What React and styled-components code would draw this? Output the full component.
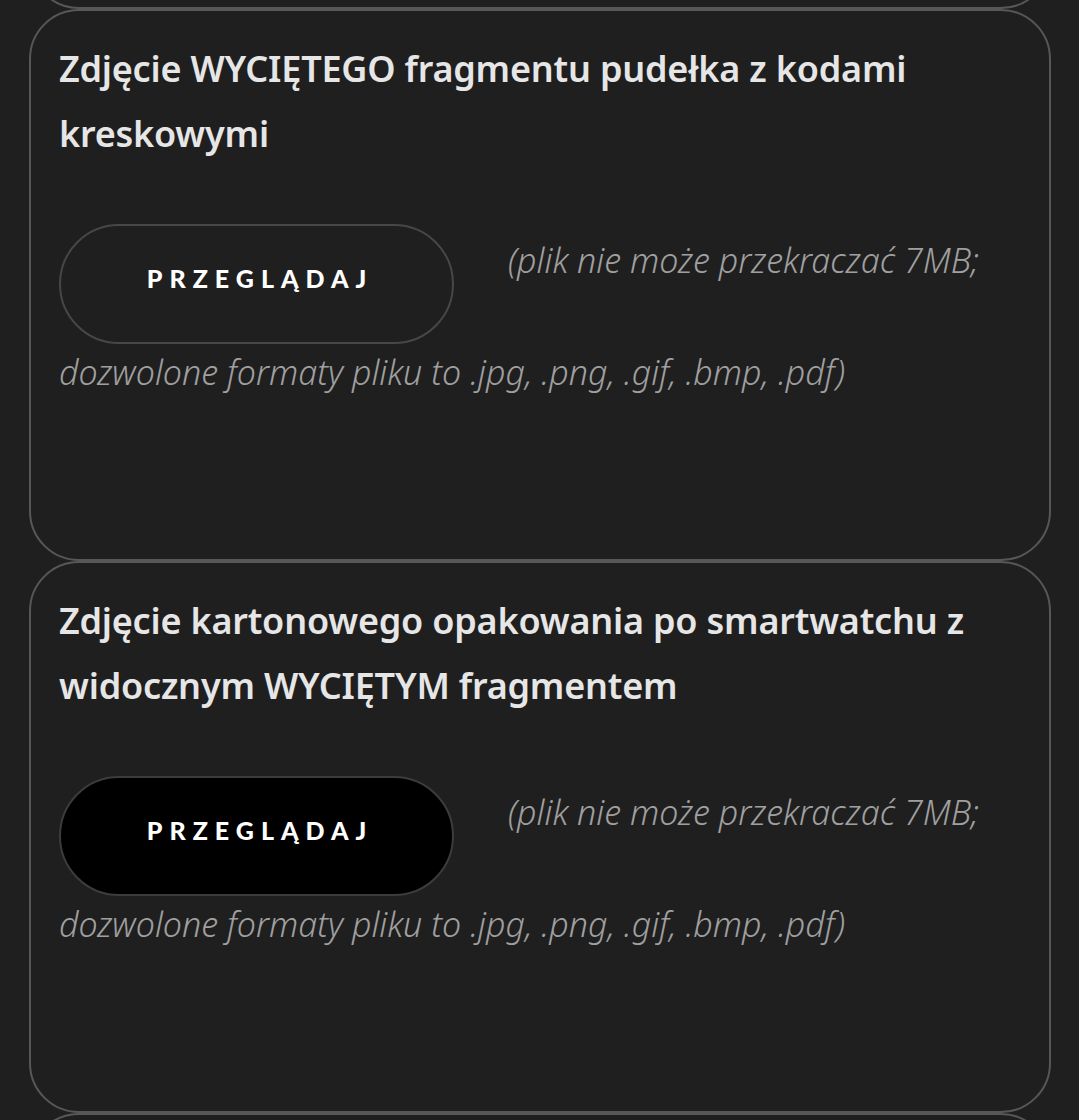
import styled, { createGlobalStyle } from 'styled-components';

const GlobalStyle = createGlobalStyle`
  html, body {
    margin: 0;
    padding: 0;
    background: #1f1f1f;
  }
  body {
    font-family: 'Noto Sans', 'Open Sans', sans-serif;
    overflow: hidden;
  }
`;

const Page = styled.main`
  display: flex;
  flex-direction: column;
  padding: 0 28px 0 29px;
  margin-top: -543px;
`;

const Card = styled.section`
  box-sizing: border-box;
  height: 552px;
  border: 2px solid #575757;
  border-radius: 50px;
  padding: 25px 28px 0 28px;
`;

const Title = styled.h2`
  margin: 0;
  color: #e6e6e6;
  font-family: 'Noto Sans', sans-serif;
  font-weight: 600;
  font-size: 36px;
  letter-spacing: -0.2px;
  line-height: 65px;
`;

const Upload = styled.div`
  margin-top: 58px;
  font-family: 'Noto Sans', sans-serif;
  font-style: italic;
  font-weight: 300;
  font-size: 34px;
  line-height: 72px;
  color: #a0a0a0;
`;

const BrowseButton = styled.button`
  display: inline-flex;
  vertical-align: top;
  align-items: center;
  justify-content: center;
  box-sizing: border-box;
  width: 395px;
  height: 120px;
  margin: 0 54px -8px 0;
  padding: 0 0 12px 7px;
  border: 2px solid ${props => (props.$filled ? '#3c3c3c' : '#474747')};
  border-radius: 60px;
  background: ${props => (props.$filled ? '#000000' : 'transparent')};
  color: #ffffff;
  font-family: 'Lato', sans-serif;
  font-style: normal;
  font-weight: 900;
  font-size: 25px;
  letter-spacing: 7px;
  cursor: pointer;
`;

const cards = [
  { title: 'Zdjęcie WYCIĘTEGO fragmentu pudełka z kodami kreskowymi', filled: false },
  { title: 'Zdjęcie kartonowego opakowania po smartwatchu z widocznym WYCIĘTYM fragmentem', filled: true },
];

export default function App() {
  return (
    <>
      <GlobalStyle />
      <Page>
        <Card />
        {cards.map((card, i) => (
          <Card key={i}>
            <Title>{card.title}</Title>
            <Upload>
              <BrowseButton $filled={card.filled}>PRZEGLĄDAJ</BrowseButton>
              (plik nie może przekraczać 7MB;
              <br />
              dozwolone formaty pliku to .jpg, .png, .gif, .bmp, .pdf)
            </Upload>
          </Card>
        ))}
        <Card />
      </Page>
    </>
  );
}
